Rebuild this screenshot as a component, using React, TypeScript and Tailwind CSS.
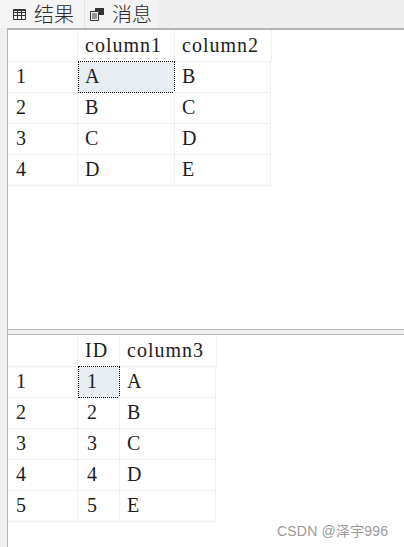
function Grid({ cols, headCols, head, rows, sel }: { cols: string; headCols: string; head: string[]; rows: string[][]; sel: number }) {
  return (
    <div className="w-fit font-['Liberation_Serif','Noto_Sans_CJK_SC',serif] text-[20px] leading-[31px] tracking-[1px] text-[#1c1c1c]">
      <div className={`grid ${headCols} h-[31px]`}>
        <div className="border-b border-r border-[#efefef]" />
        {head.map((h) => (
          <div key={h} className="border-b border-r border-[#efefef] pl-[7px]">{h}</div>
        ))}
      </div>
      {rows.map((r, i) => (
        <div key={i} className={`grid ${cols} h-[31px]`}>
          <div className="border-b border-r border-[#efefef] pl-[8px]">{i + 1}</div>
          {r.map((c, j) => {
            const numeric = /^[0-9]$/.test(c);
            if (i === 0 && j === sel) {
              return (
                <div key={j} className={`border border-dotted border-black bg-[#e8edf1] leading-[29px] ${numeric ? "pl-[8px]" : "pl-[6px]"}`}>
                  {c}
                </div>
              );
            }
            return (
              <div key={j} className={`border-b border-r border-[#efefef] ${numeric ? "pl-[9px]" : "pl-[7px]"}`}>
                {c}
              </div>
            );
          })}
        </div>
      ))}
    </div>
  );
}

export default function App() {
  return (
    <div className="relative h-[547px] w-[404px] overflow-hidden bg-white">
      <div className="flex h-[28px] bg-[#eeeeee] font-['Noto_Sans_CJK_SC',sans-serif] text-[20px] font-light text-[#2a2a2a]">
        <div className="flex w-[84px] items-center bg-[#f5f5f5] pl-[13px]">
          <svg width="13" height="11" viewBox="0 0 13 11" fill="none" stroke="#333" className="mr-[8px]">
            <path d="M.5.5h12v10H.5zM.5 3.5h12M.5 6.5h12M4.5 1v9.5M8.5 1v9.5" />
            <path d="M0 1.5h13" />
          </svg>
          <span>结果</span>
        </div>
        <div className="flex w-[74px] items-center border-l border-[#e2e2e2] bg-[#f3f3f3] pl-[5px]">
          <svg width="14" height="13" viewBox="0 0 14 13" fill="none" stroke="#333" className="mr-[8px]">
            <path d="M.5 3.5h8v9h-8zM2 6h5M2 8h5M2 10h5" />
            <path d="M5 0h9v7H9V3H5z" fill="#333" stroke="none" />
          </svg>
          <span>消息</span>
        </div>
      </div>
      <div className="flex h-[519px] bg-[#f0f0f0] pl-[7px]">
        <div className="flex w-full flex-col border-l border-[#b4b4b4]">
          <div className="h-[302px] border-y border-t-2 border-[#b4b4b4] bg-white">
            <Grid
              cols="grid-cols-[70px_97px_96px]"
              headCols="grid-cols-[70px_97px_97px]"
              head={["column1", "column2"]}
              rows={[["A", "B"], ["B", "C"], ["C", "D"], ["D", "E"]]}
              sel={0}
            />
          </div>
          <div className="h-[4px] bg-[#f0f0f0]" />
          <div className="flex-1 border-t border-[#b4b4b4] bg-white">
            <Grid
              cols="grid-cols-[70px_42px_96px]"
              headCols="grid-cols-[70px_42px_97px]"
              head={["ID", "column3"]}
              rows={[["1", "A"], ["2", "B"], ["3", "C"], ["4", "D"], ["5", "E"]]}
              sel={0}
            />
          </div>
        </div>
      </div>
      <div className="absolute left-[277px] top-[521px] font-['Liberation_Sans','Noto_Sans_CJK_SC',sans-serif] text-[14px] tracking-[0.2px] text-[#9a9a9a]">CSDN @泽宇996</div>
    </div>
  );
}
